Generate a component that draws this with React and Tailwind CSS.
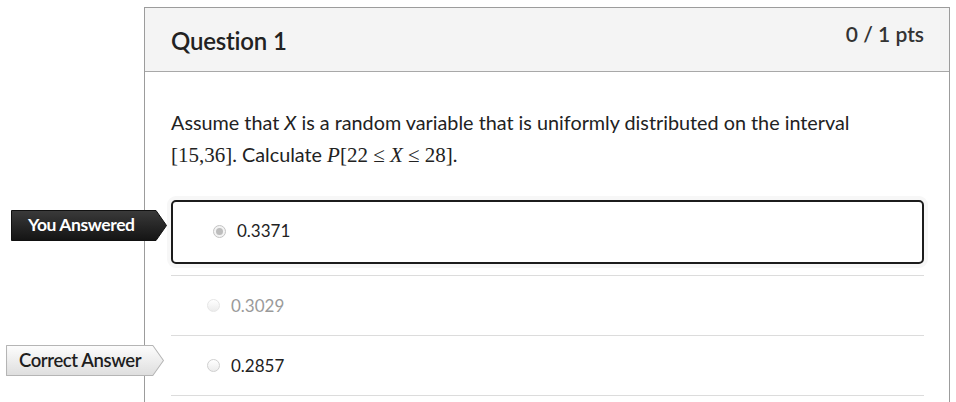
import { useId } from 'react';

function Tag({ label, dark, className }) {
  const gid = useId().replace(/:/g, '');
  return (
    <div className={`absolute h-[33px] flex items-center ${className}`}>
      <svg className="absolute inset-0 w-full h-full" viewBox="0 0 158 33" preserveAspectRatio="none">
        <defs>
          <linearGradient id={gid} x1="0" y1="0" x2="0" y2="1">
            {dark ? (
              <>
                <stop offset="0" stopColor="#3a3a3a" />
                <stop offset="1" stopColor="#141414" />
              </>
            ) : (
              <>
                <stop offset="0" stopColor="#fdfdfd" />
                <stop offset="1" stopColor="#dedede" />
              </>
            )}
          </linearGradient>
        </defs>
        <path
          d="M1.5 1.5 H146 L156.5 16.5 L146 31.5 H1.5 Z"
          fill={`url(#${gid})`}
          stroke={dark ? '#111' : '#b5b5b5'}
          strokeWidth="1"
          strokeLinejoin="round"
        />
      </svg>
      <span
        className={`relative tracking-[-0.4px] ${
          dark
            ? 'text-white font-bold text-[17.5px] pl-[18px]'
            : 'text-[#1e1e1e] font-semibold text-[18.5px] pl-[14px]'
        }`}
      >
        {label}
      </span>
    </div>
  );
}

function Radio({ tone }) {
  if (tone === 'picked') {
    return (
      <span className="w-[13px] h-[13px] rounded-full border border-[#c4c4c4] bg-[#f3f3f3] flex items-center justify-center">
        <span className="w-[7px] h-[7px] rounded-full bg-[#bdbdbd]" />
      </span>
    );
  }
  return (
    <span
      className={`w-[13px] h-[13px] rounded-full border bg-gradient-to-b from-white to-[#ececec] ${
        tone === 'faint' ? 'border-[#e6e6e6]' : 'border-[#cfcfcf]'
      }`}
    />
  );
}

export default function App() {
  return (
    <div className="w-[956px] h-[402px] overflow-hidden bg-white pt-[7px] pl-[144px] pr-[6px] font-['Lato','Liberation_Sans',sans-serif] text-[#222]">
      <div className="h-[420px] border-l border-t border-r border-[#9c9c9c]">
        <div className="h-[64px] bg-[#f4f4f4] border-b border-[#a8a8a8] flex justify-between pl-[26px] pr-[25px]">
          <h2 className="pt-[18px] text-[24px] leading-[30px] font-semibold tracking-[-0.2px]">Question 1</h2>
          <div className="pt-[13px] text-[21px] leading-[26px] font-semibold text-[#333]">0 / 1 pts</div>
        </div>

        <div className="pl-[26px] pr-[25px]">
          <p className="pt-[34px] text-[19.8px] leading-[32px] text-[#222]">
            Assume that <i>X</i> is a random variable that is uniformly distributed on the interval
            <br />
            <span className="font-['Liberation_Serif',serif] text-[21px]">[15,36]</span>. Calculate{' '}
            <span className="font-['Liberation_Serif',serif] text-[21px]">
              <i>P</i>[22 ≤ <i>X</i> ≤ 28]
            </span>
            .
          </p>

          <div className="mt-[29px]">
            <div className="relative h-[64px] border-2 border-[#1c1c1c] rounded-[5px] flex items-center gap-[11px] pl-[40px] pb-[2px] shadow-[0_0_0_4px_#f7f7f7]">
              <Tag label="You Answered" dark className="left-[-163px] top-[7px] w-[158px]" />
              <Radio tone="picked" />
              <span className="text-[17px] text-[#222]">0.3371</span>
            </div>

            <div className="h-[11px]" />

            <div className="h-[60px] border-t border-[#dcdcdc] flex items-center gap-[11px] pl-[36px]">
              <Radio tone="faint" />
              <span className="text-[17px] text-[#9a9a9a]">0.3029</span>
            </div>

            <div className="relative h-[61px] border-t border-b border-[#dcdcdc] flex items-center gap-[11px] pl-[36px]">
              <Tag label="Correct Answer" className="left-[-166px] top-[8px] w-[160px]" />
              <Radio tone="plain" />
              <span className="text-[17px] text-[#222]">0.2857</span>
            </div>
          </div>
        </div>
      </div>
    </div>
  );
}
